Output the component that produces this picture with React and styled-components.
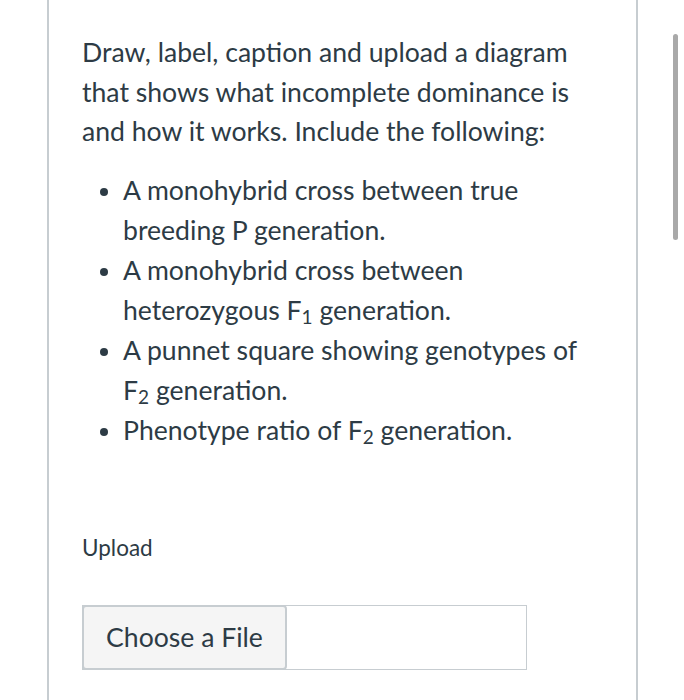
import React from 'react'
import styled, { createGlobalStyle } from 'styled-components'

const Global = createGlobalStyle`
  body {
    margin: 0;
    background: #fff;
    font-family: 'Lato', 'Liberation Sans', sans-serif;
    color: #2d3b45;
  }
`

const Page = styled.div`
  position: relative;
  width: 684px;
  height: 700px;
  overflow: hidden;
`

const Card = styled.div`
  margin-left: 47px;
  width: 591px;
  height: 700px;
  border-left: 2px solid #c7cdd1;
  border-right: 2px solid #c7cdd1;
  padding: 33px 0 0 33px;
  box-sizing: border-box;
`

const Prompt = styled.p`
  margin: 0;
  font-size: 26.6px;
  line-height: 39.5px;
  width: 500px;
`

const List = styled.ul`
  margin: 18px 0 0;
  padding-left: 41px;
  font-size: 26.6px;
  line-height: 40px;
  width: 470px;
  li::marker {
    font-size: 24px;
  }
`

const Sub = styled.sub`
  font-size: 19px;
  line-height: 0;
  vertical-align: -4px;
`

const Label = styled.div`
  margin-top: 82px;
  font-size: 22.5px;
  line-height: 32px;
`

const FileInput = styled.div`
  margin-top: 41px;
  width: 445px;
  height: 65px;
  border: 1px solid #c7cdd1;
  display: flex;
  box-sizing: border-box;
`

const ChooseButton = styled.div`
  width: 205px;
  margin: -1px 0 -1px -1px;
  background: #f5f5f5;
  border: 2px solid #c7cdd1;
  border-radius: 4px;
  display: flex;
  align-items: center;
  justify-content: center;
  font-size: 26.6px;
  color: #2d3b45;
  box-sizing: border-box;
`

const Scrollbar = styled.div`
  position: absolute;
  left: 673px;
  top: 34px;
  width: 5px;
  height: 206px;
  border-radius: 3px;
  background: #a9a9a9;
`

export default function App() {
  return (
    <Page>
      <Global />
      <Card>
        <Prompt>
          Draw, label, caption and upload a diagram that shows what incomplete dominance is
          and how it works. Include the following:
        </Prompt>
        <List>
          <li>A monohybrid cross between true breeding P generation.</li>
          <li>A monohybrid cross between heterozygous F<Sub>1</Sub> generation.</li>
          <li>A punnet square showing genotypes of F<Sub>2</Sub> generation.</li>
          <li>Phenotype ratio of F<Sub>2</Sub> generation.</li>
        </List>
        <Label>Upload</Label>
        <FileInput>
          <ChooseButton>Choose a File</ChooseButton>
        </FileInput>
      </Card>
      <Scrollbar />
    </Page>
  )
}
